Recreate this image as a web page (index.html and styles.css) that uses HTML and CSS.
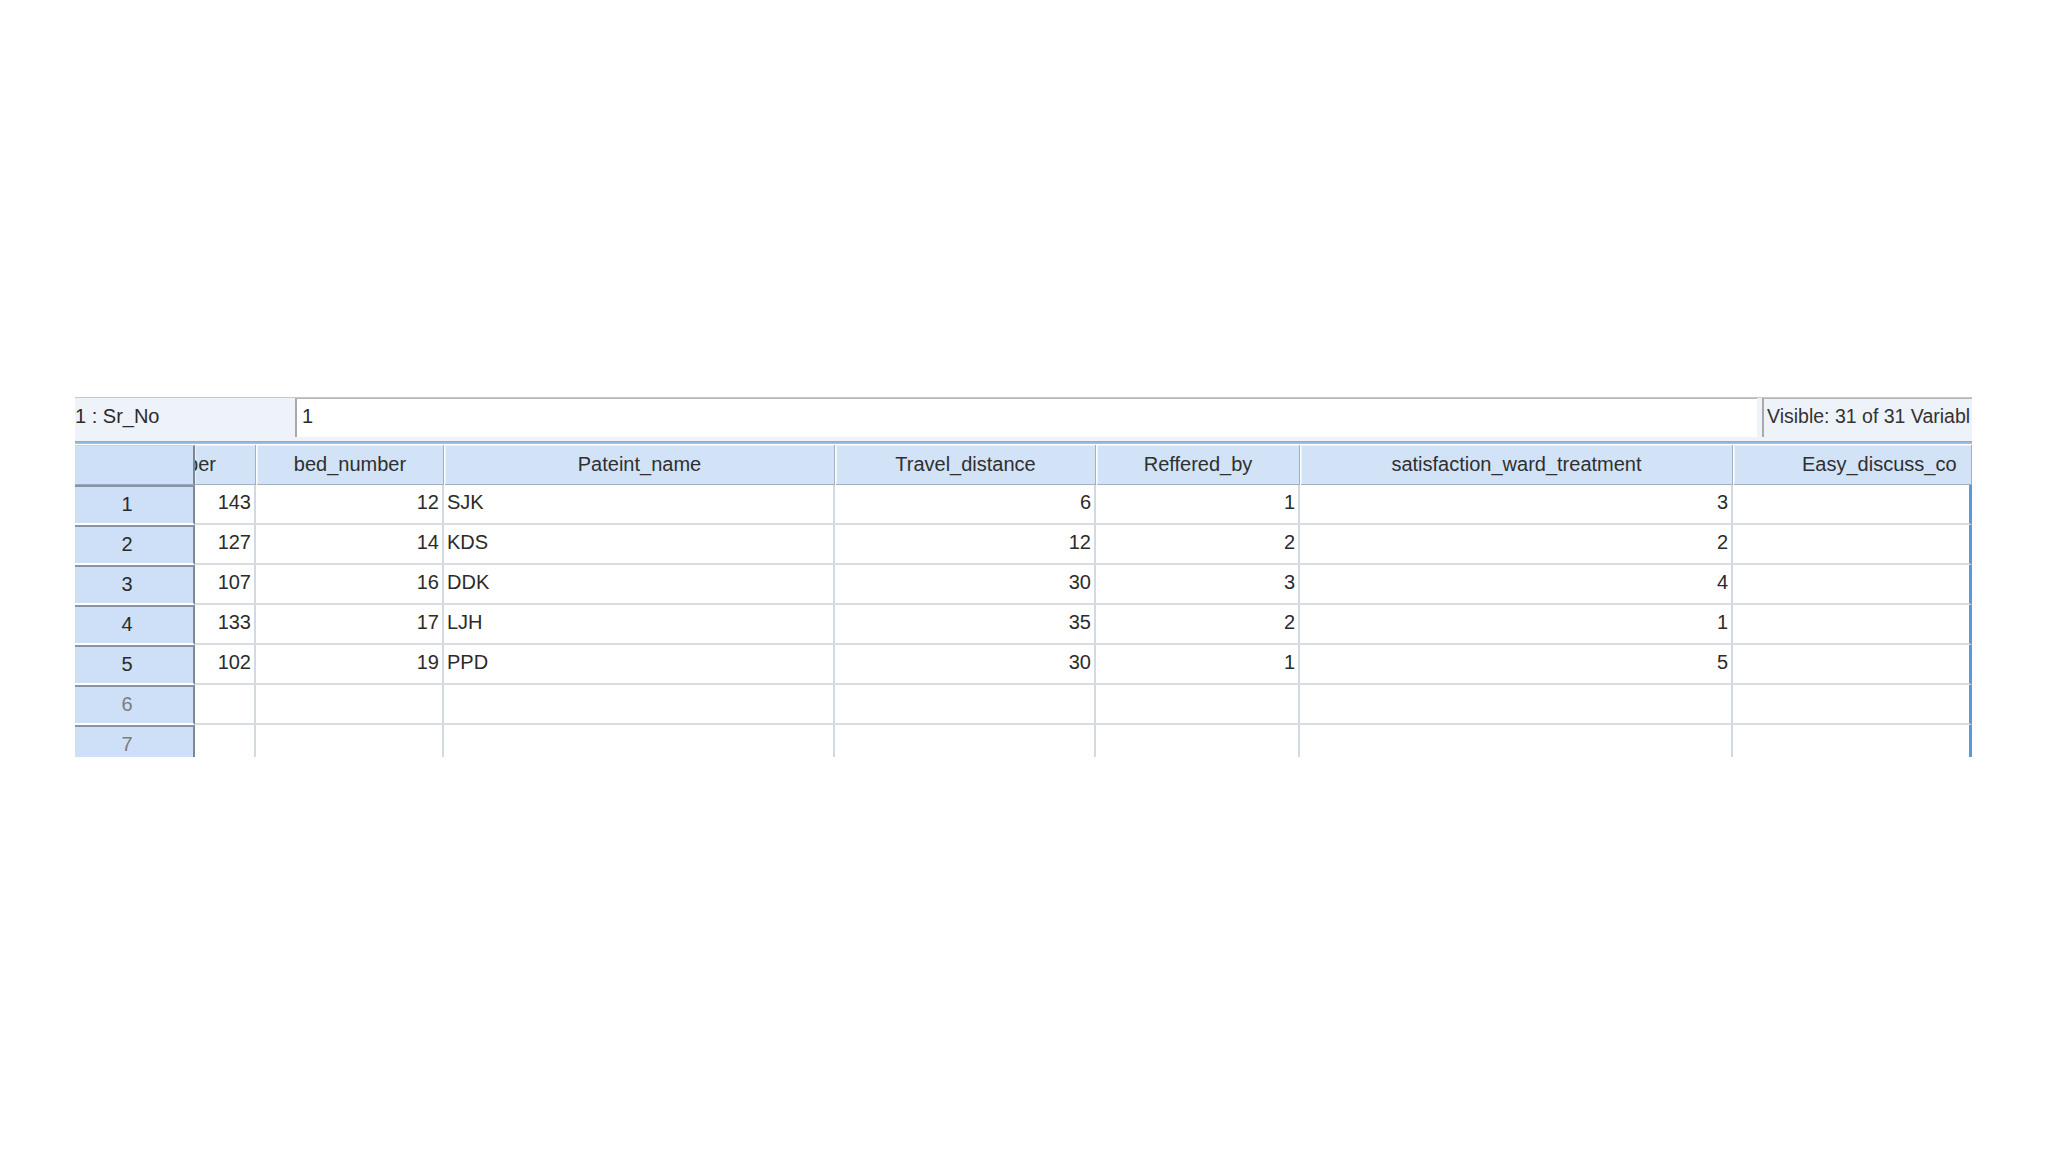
FILE: index.html
```html
<!DOCTYPE html>
<html>
<head>
<meta charset="utf-8">
<link rel="stylesheet" href="styles.css">
</head>
<body>
<div class="editor">
  <div class="topbar">
    <div class="cellname">1 : Sr_No</div>
    <div class="cellvalue">1</div>
    <div class="visible">Visible: 31 of 31 Variabl</div>
  </div>
  <div class="blueline"></div>
  <div class="grid">
    <div class="row head">
      <div class="corner"></div>
      <div class="hc c1">ber</div>
      <div class="hc c2">bed_number</div>
      <div class="hc c3">Pateint_name</div>
      <div class="hc c4">Travel_distance</div>
      <div class="hc c5">Reffered_by</div>
      <div class="hc c6">satisfaction_ward_treatment</div>
      <div class="hc c7 clip">Easy_discuss_co</div>
    </div>
    <div class="row">
      <div class="rh">1</div>
      <div class="dc c1 num">143</div>
      <div class="dc c2 num">12</div>
      <div class="dc c3">SJK</div>
      <div class="dc c4 num">6</div>
      <div class="dc c5 num">1</div>
      <div class="dc c6 num">3</div>
      <div class="dc c7 last"></div>
    </div>
    <div class="row">
      <div class="rh">2</div>
      <div class="dc c1 num">127</div>
      <div class="dc c2 num">14</div>
      <div class="dc c3">KDS</div>
      <div class="dc c4 num">12</div>
      <div class="dc c5 num">2</div>
      <div class="dc c6 num">2</div>
      <div class="dc c7 last"></div>
    </div>
    <div class="row">
      <div class="rh">3</div>
      <div class="dc c1 num">107</div>
      <div class="dc c2 num">16</div>
      <div class="dc c3">DDK</div>
      <div class="dc c4 num">30</div>
      <div class="dc c5 num">3</div>
      <div class="dc c6 num">4</div>
      <div class="dc c7 last"></div>
    </div>
    <div class="row">
      <div class="rh">4</div>
      <div class="dc c1 num">133</div>
      <div class="dc c2 num">17</div>
      <div class="dc c3">LJH</div>
      <div class="dc c4 num">35</div>
      <div class="dc c5 num">2</div>
      <div class="dc c6 num">1</div>
      <div class="dc c7 last"></div>
    </div>
    <div class="row">
      <div class="rh">5</div>
      <div class="dc c1 num">102</div>
      <div class="dc c2 num">19</div>
      <div class="dc c3">PPD</div>
      <div class="dc c4 num">30</div>
      <div class="dc c5 num">1</div>
      <div class="dc c6 num">5</div>
      <div class="dc c7 last"></div>
    </div>
    <div class="row">
      <div class="rh empty">6</div>
      <div class="dc c1"></div>
      <div class="dc c2"></div>
      <div class="dc c3"></div>
      <div class="dc c4"></div>
      <div class="dc c5"></div>
      <div class="dc c6"></div>
      <div class="dc c7 last"></div>
    </div>
    <div class="row">
      <div class="rh empty">7</div>
      <div class="dc c1"></div>
      <div class="dc c2"></div>
      <div class="dc c3"></div>
      <div class="dc c4"></div>
      <div class="dc c5"></div>
      <div class="dc c6"></div>
      <div class="dc c7 last"></div>
    </div>
  </div>
</div>
</body>
</html>
```

FILE: styles.css
```css
html, body {
  margin: 0;
  padding: 0;
  background: #ffffff;
}
body {
  width: 2048px;
  height: 1152px;
  overflow: hidden;
  font-family: "Liberation Sans", Arial, sans-serif;
  font-size: 20px;
  color: #2b2b2b;
}
.editor {
  margin-top: 397px;
  margin-left: 75px;
  width: 1897px;
}
.topbar {
  display: flex;
  height: 44px;
  border-top: 1px solid #c4c8ce;
  background: #eef2f9;
  box-sizing: border-box;
  overflow: hidden;
}
.cellname {
  width: 215px;
  flex: none;
  line-height: 36px;
  white-space: nowrap;
  color: #2b2b2b;
}
.cellvalue {
  margin-left: 5px;
  width: 1462px;
  flex: none;
  height: 39px;
  box-sizing: border-box;
  background: #ffffff;
  border-left: 2px solid #a9a9a9;
  border-top: 1px solid #b7b7b7;
  padding-left: 5px;
  line-height: 35px;
}
.visible {
  margin-left: 5px;
  flex: 1;
  height: 39px;
  box-sizing: border-box;
  border-left: 2px solid #a9a9a9;
  border-top: 1px solid #b7b7b7;
  background: #eef2f9;
  padding-left: 3px;
  line-height: 35px;
  white-space: nowrap;
  overflow: hidden;
  font-size: 19.5px;
  color: #333;
}
.blueline {
  height: 3px;
  background: linear-gradient(#7fa9d8, #a9c6e8);
  border-bottom: 1px solid #ffffff;
}
.grid {
  height: 312px;
  overflow: hidden;
}
.row {
  display: flex;
  height: 40px;
}
.c1 { width: 61px; }
.c2 { width: 188px; }
.c3 { width: 391px; }
.c4 { width: 261px; }
.c5 { width: 204px; }
.c6 { width: 433px; }
.c7 { width: 239px; }
.corner, .rh {
  width: 120px;
  flex: none;
  box-sizing: border-box;
  background: #cde0f7;
  border-right: 2px solid #7d8896;
}
.corner {
  border-bottom: 1px solid #9aa9bb;
  border-top: 1px solid #c5d6ea;
}
.hc {
  flex: none;
  box-sizing: border-box;
  background: #d2e3f7;
  border-right: 1px solid #9fb0c3;
  border-bottom: 1px solid #9fb0c3;
  box-shadow: inset 1px 1px 0 #e9f1fb;
  margin-left: 1px;
  text-align: center;
  line-height: 38px;
  white-space: nowrap;
  overflow: hidden;
  color: #2f2f2f;
}
.hc.c1 {
  margin-left: 0;
  direction: rtl;
  text-align: right;
  padding-right: 39px;
}
.hc.c2 { width: 187px; }
.hc.c3 { width: 390px; }
.hc.c4 { width: 260px; }
.hc.c5 { width: 203px; }
.hc.c6 { width: 432px; }
.hc.c7 { width: 238px; }
.hc.clip {
  text-align: left;
  padding-left: 68px;
}
.rh {
  text-align: center;
  padding-right: 14px;
  line-height: 34px;
  border-top: 2px solid #8895a5;
  border-bottom: 2px solid #ffffff;
  color: #2b2b2b;
}
.rh.empty {
  color: #7d7d7d;
}
.dc {
  flex: none;
  box-sizing: border-box;
  background: #ffffff;
  border-right: 2px solid #d2d9e3;
  border-bottom: 2px solid #d9dde3;
  line-height: 35px;
  padding-left: 3px;
  white-space: nowrap;
}
.dc.num {
  text-align: right;
  padding-right: 3px;
  padding-left: 0;
}
.dc.last {
  border-right: 3px solid #5a9ad6;
}
```
